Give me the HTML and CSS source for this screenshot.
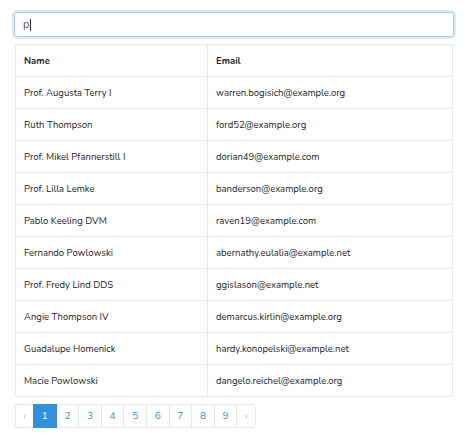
FILE: index.html
```html
<!DOCTYPE html>
<html>
<head>
<meta charset="utf-8">
<link rel="stylesheet" href="styles.css">
</head>
<body>
<div class="wrap">
  <div class="search"><span class="val">p</span><span class="caret"></span></div>
  <table class="tbl">
    <thead>
      <tr><th>Name</th><th>Email</th></tr>
    </thead>
    <tbody>
      <tr><td>Prof. Augusta Terry I</td><td>warren.bogisich@example.org</td></tr>
      <tr><td>Ruth Thompson</td><td>ford52@example.org</td></tr>
      <tr><td>Prof. Mikel Pfannerstill I</td><td>dorian49@example.com</td></tr>
      <tr><td>Prof. Lilla Lemke</td><td>banderson@example.org</td></tr>
      <tr><td>Pablo Keeling DVM</td><td>raven19@example.com</td></tr>
      <tr><td>Fernando Powlowski</td><td>abernathy.eulalia@example.net</td></tr>
      <tr><td>Prof. Fredy Lind DDS</td><td>ggislason@example.net</td></tr>
      <tr><td>Angie Thompson IV</td><td>demarcus.kirlin@example.org</td></tr>
      <tr><td>Guadalupe Homenick</td><td>hardy.konopelski@example.net</td></tr>
      <tr><td>Macie Powlowski</td><td>dangelo.reichel@example.org</td></tr>
    </tbody>
  </table>
  <ul class="pager">
    <li class="pg arrow">‹</li>
    <li class="pg active">1</li>
    <li class="pg">2</li>
    <li class="pg">3</li>
    <li class="pg">4</li>
    <li class="pg">5</li>
    <li class="pg">6</li>
    <li class="pg">7</li>
    <li class="pg">8</li>
    <li class="pg">9</li>
    <li class="pg arrow">›</li>
  </ul>
</div>
</body>
</html>
```
FILE: styles.css
```css
html, body {
  margin: 0;
  padding: 0;
  background: #ffffff;
}
body {
  font-family: "Nunito", "Lato", "Open Sans", sans-serif;
  font-size: 9.5px;
  color: #212529;
}
.wrap {
  padding: 12px 20px 0 14px;
}
.search {
  box-sizing: border-box;
  height: 25px;
  border: 1px solid #a1cbef;
  border-radius: 3px;
  box-shadow: 0 0 0 2px rgba(52, 144, 220, 0.18);
  display: flex;
  align-items: center;
  padding-left: 8px;
  font-size: 11px;
  color: #495057;
}
.caret {
  display: inline-block;
  width: 1px;
  height: 12px;
  background: #333;
  margin-left: 1px;
}
.tbl {
  margin: 7px 0 0 1px;
  width: 438px;
  border-collapse: collapse;
}
.tbl th, .tbl td {
  border: 1px solid #e6e8eb;
  height: 32px;
  padding: 0 8px;
  text-align: left;
  vertical-align: middle;
  box-sizing: border-box;
}
.tbl th {
  font-weight: 700;
}
.tbl th:first-child, .tbl td:first-child {
  width: 192px;
}
.pager {
  list-style: none;
  margin: 7px 0 0 1px;
  padding: 0;
  display: flex;
}
.pg {
  box-sizing: border-box;
  width: 23.6px;
  height: 24px;
  display: flex;
  align-items: center;
  justify-content: center;
  border: 1px solid #e6e8eb;
  margin-left: -1px;
  color: #3490dc;
  font-size: 10px;
  flex-shrink: 0;
}
.pg:first-child {
  margin-left: 0;
  border-radius: 3px 0 0 3px;
  width: 19px;
}
.pg:last-child {
  border-radius: 0 3px 3px 0;
  width: 20px;
}
.pg.arrow {
  color: #a6acb3;
}
.pg.active {
  background: #3490dc;
  border-color: #3490dc;
  color: #ffffff;
  position: relative;
}
```
